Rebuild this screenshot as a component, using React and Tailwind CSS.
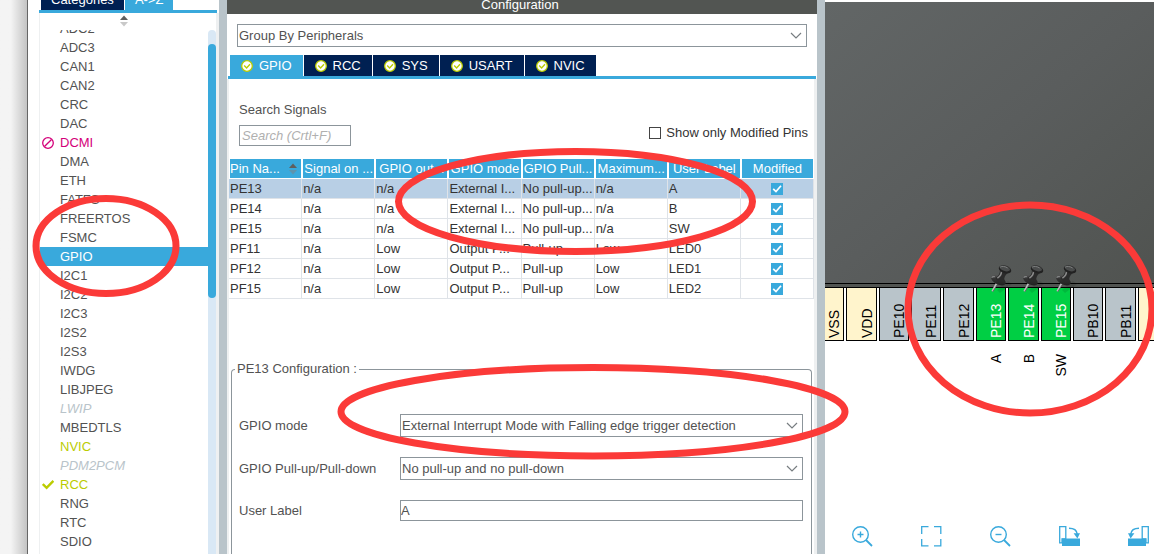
import React from "react";

const peripherals = [
  "ADC2", "ADC3", "CAN1", "CAN2", "CRC", "DAC", "DCMI", "DMA", "ETH", "FATFS",
  "FREERTOS", "FSMC", "GPIO", "I2C1", "I2C2", "I2C3", "I2S2", "I2S3", "IWDG",
  "LIBJPEG", "LWIP", "MBEDTLS", "NVIC", "PDM2PCM", "RCC", "RNG", "RTC", "SDIO",
];

const itemStyle = {
  DCMI: "text-[#d4007a]",
  GPIO: "bg-[#39a9dc] text-white",
  LWIP: "italic text-[#b9c4ca]",
  PDM2PCM: "italic text-[#b9c4ca]",
  NVIC: "text-[#bbcc01]",
  RCC: "text-[#bbcc01]",
};

const headers = ["Pin Na...", "Signal on ...", "GPIO out...", "GPIO mode", "GPIO Pull...", "Maximum...", "User Label", "Modified"];

const rows = [
  ["PE13", "n/a", "n/a", "External I...", "No pull-up...", "n/a", "A"],
  ["PE14", "n/a", "n/a", "External I...", "No pull-up...", "n/a", "B"],
  ["PE15", "n/a", "n/a", "External I...", "No pull-up...", "n/a", "SW"],
  ["PF11", "n/a", "Low", "Output P...", "Pull-up", "Low", "LED0"],
  ["PF12", "n/a", "Low", "Output P...", "Pull-up", "Low", "LED1"],
  ["PF15", "n/a", "Low", "Output P...", "Pull-up", "Low", "LED2"],
];

const pins = [
  { name: "VSS", kind: "power" },
  { name: "VDD", kind: "power" },
  { name: "PE10", kind: "free" },
  { name: "PE11", kind: "free" },
  { name: "PE12", kind: "free" },
  { name: "PE13", kind: "used", label: "A" },
  { name: "PE14", kind: "used", label: "B" },
  { name: "PE15", kind: "used", label: "SW" },
  { name: "PB10", kind: "free" },
  { name: "PB11", kind: "free" },
  { name: "", kind: "power" },
];

const pinStyle = {
  power: "bg-[#fff4cc] text-black",
  free: "bg-[#b9c4ca] text-black",
  used: "bg-[#00cf44] text-white",
};

function SortArrows({ className, up, down }) {
  return (
    <svg className={className} width="8" height="12" viewBox="0 0 8 12" aria-hidden="true">
      <path d="M4 0.5 8 5H0Z" fill={up} />
      <path d="M4 11.5 0 7H8Z" fill={down} />
    </svg>
  );
}

function Forbidden() {
  return (
    <svg width="12" height="12" viewBox="0 0 12 12" fill="none" stroke="#d4007a" strokeWidth="1.3" aria-hidden="true">
      <circle cx="6" cy="6" r="5.3" />
      <path d="M2.7 9.3 9.3 2.7" />
    </svg>
  );
}

function Tick() {
  return (
    <svg width="12" height="12" viewBox="0 0 12 12" fill="none" stroke="#bbcc01" strokeWidth="2.4" aria-hidden="true">
      <path d="M0.8 5 4.6 8.8 11.4 1.8" />
    </svg>
  );
}

function TabBadge() {
  return (
    <svg width="12" height="12" viewBox="0 0 12 12" fill="none" aria-hidden="true">
      <circle cx="6" cy="6" r="5.3" fill="#fff" stroke="#bbcc01" strokeWidth="1.3" />
      <path d="M3.2 5.6 5.6 7.9 9 4.3" stroke="#bbcc01" strokeWidth="1.4" />
    </svg>
  );
}

function Dropdown({ id, label, value }) {
  return (
    <div className="relative">
      <select
        id={id}
        aria-label={label}
        className="block h-[23px] w-full appearance-none border border-[#8c959b] bg-white pl-px pr-6 text-[#525252] outline-none"
      >
        <option>{value}</option>
      </select>
      <svg className="pointer-events-none absolute right-1 top-2 mr-px" width="12" height="8" viewBox="0 0 12 8" fill="none" stroke="#777d80" strokeWidth="1.2" aria-hidden="true">
        <path d="M1 1 6 6 11 1" />
      </svg>
    </div>
  );
}

function Tab({ name, active }) {
  return (
    <button type="button" className={`flex h-[21px] items-center gap-1.5 px-[11px] text-white ${active ? "bg-[#39a9dc]" : "bg-[#002052]"}`}>
      <TabBadge />
      {name}
    </button>
  );
}

function PushPin() {
  return (
    <svg className="absolute -top-6 left-3 z-10" width="26" height="30" viewBox="0 0 26 30" aria-hidden="true">
      <defs>
        <linearGradient id="pinMetal" x1="0" y1="0" x2="1" y2="1">
          <stop offset="0" stopColor="#6a6a6a" />
          <stop offset="0.4" stopColor="#333" />
          <stop offset="1" stopColor="#1a1a1a" />
        </linearGradient>
      </defs>
      <path d="M9 26 20 17 24 20 12 29Z" fill="#000" opacity="0.1" />
      <path d="M9.4 18 4.2 27.4" stroke="#bcbfbf" strokeWidth="1.8" />
      <path d="M10.6 18.6 4.8 27.8" stroke="#555" strokeWidth="0.8" />
      <ellipse cx="10.4" cy="16.2" rx="8" ry="4.2" transform="rotate(27 10.4 16.2)" fill="url(#pinMetal)" />
      <path d="M7.6 14C10.4 12.4 12.2 9.6 12 5.6L20 8.8C17.2 10.8 16 13.6 16.2 17.2 13.6 18.8 8.4 17 7.6 14Z" fill="#2b2b2b" />
      <path d="M9.4 14.2C11.8 12.6 13.4 10.2 13.6 7.4" stroke="#8a8a8a" strokeWidth="1.5" fill="none" />
      <ellipse cx="17" cy="5.4" rx="6.4" ry="3.8" transform="rotate(18 17 5.4)" fill="#222" />
      <ellipse cx="16.8" cy="4.4" rx="5.4" ry="2.6" transform="rotate(18 16.8 4.4)" fill="#4a4c4c" />
      <path d="M12.2 3.2C14.2 1.8 17 2.4 19.6 4" stroke="#7b7d7d" strokeWidth="1" fill="none" />
      <path d="M3.6 13.6C4.4 12.6 5.6 12.4 7 12.8" stroke="#858787" strokeWidth="1.1" fill="none" />
    </svg>
  );
}

function ZoomIcon({ plus }) {
  return (
    <svg width="21" height="21" viewBox="0 0 21 21" fill="none" stroke="#39a9dc" strokeWidth="1.4" aria-hidden="true">
      <circle cx="8.5" cy="8.5" r="7.8" />
      <path d="M14 14 20 20" strokeWidth="1.8" />
      <path d={plus ? "M5.5 8.5H11.5M8.5 5.5V11.5" : "M5.5 8.5H11.5"} />
    </svg>
  );
}

function FitIcon() {
  return (
    <svg width="21" height="21" viewBox="0 0 21 21" fill="none" stroke="#39a9dc" strokeWidth="1.3" aria-hidden="true">
      <path d="M0.7 8V0.7H7.5M13 0.7H19.8V8M19.8 13V19.8H13M7.5 19.8H0.7V13" />
    </svg>
  );
}

function RotateIcon({ flipped }) {
  return (
    <svg width="21" height="21" viewBox="0 0 21 21" fill="none" aria-hidden="true">
      <g transform={flipped ? "translate(21 0) scale(-1 1)" : undefined}>
        <path d="M0.7 0.7H6.8V13H3V16.8H0.7Z" stroke="#39a9dc" strokeWidth="1.3" />
        <path d="M3 12.5H21V20H3Z" fill="#39a9dc" />
        <path d="M10 2.2C14.5 2.2 17.8 4.4 18.2 8" stroke="#39a9dc" strokeWidth="1.4" />
        <path d="M14.6 7.2H21L18.4 12.4Z" fill="#39a9dc" />
      </g>
    </svg>
  );
}

function Sidebar() {
  return (
    <aside className="flex w-[180px] shrink-0 flex-col">
      <div className="flex h-2.5 items-end gap-px overflow-hidden pl-0.5 text-white">
        <button type="button" className="h-5 shrink-0 bg-[#002052] px-2.5">Categories</button>
        <button type="button" className="h-5 shrink-0 bg-[#39a9dc] px-2.5">A-&gt;Z</button>
      </div>
      <div className="mr-0.5 h-[3px] shrink-0 bg-[#39a9dc]" />
      <div className="flex min-h-0 flex-1 flex-col border-l border-r-[3px] border-[#eef0f1]">
        <div className="flex h-[17px] shrink-0 justify-center pr-2 pt-0.5">
          <SortArrows up="#5f5f5f" down="#c9c9c9" />
        </div>
        <div className="flex min-h-0 flex-1">
          <ul className="min-w-0 flex-1 overflow-hidden text-[#525252]">
            {peripherals.map((name, i) => (
              <li key={name} className={`flex h-[19px] items-center ${i === 0 ? "-mt-[11px]" : ""} ${itemStyle[name] || ""}`}>
                <span className="flex w-5 shrink-0 pl-0.5">
                  {name === "DCMI" && <Forbidden />}
                  {name === "RCC" && <Tick />}
                </span>
                {name}
              </li>
            ))}
          </ul>
          <div className="w-2 rounded-t-full bg-[#d9e8f5] pt-3.5">
            <div className="h-[254px] rounded-full bg-[#39a9dc]" />
          </div>
        </div>
      </div>
    </aside>
  );
}

function PinTable() {
  return (
    <table className="mt-[13px] w-full table-fixed border-separate border-spacing-0">
      <thead>
        <tr className="h-5 text-white">
          {headers.map((h, i) => (
            <th key={h} className="overflow-hidden whitespace-nowrap border-x border-b border-white bg-[#39a9dc] p-0 text-center font-normal">
              {i === 0 ? (
                <span className="flex items-center justify-between pr-1">
                  {h}
                  <SortArrows up="#5f5f5f" down="#5d93ad" />
                </span>
              ) : (
                h
              )}
            </th>
          ))}
        </tr>
      </thead>
      <tbody className="text-[#333]">
        {rows.map((r, i) => (
          <tr key={r[0]} className={`h-5 ${i === 0 ? "bg-[#b8cfe5]" : ""}`}>
            {r.map((c, j) => (
              <td key={j} className="overflow-hidden whitespace-nowrap border-b border-r border-[#dfe3e8] p-0 pl-px">{c}</td>
            ))}
            <td className="border-b border-r border-[#dfe3e8] p-0">
              <span className="relative mx-auto flex size-3">
                <input
                  type="checkbox"
                  defaultChecked
                  aria-label={`${r[0]} modified`}
                  className="size-3 appearance-none border border-[#39a9dc] bg-white checked:bg-[#39a9dc]"
                />
                <svg className="pointer-events-none absolute inset-0" width="12" height="12" viewBox="0 0 12 12" fill="none" stroke="#fff" strokeWidth="1.7" aria-hidden="true">
                  <path d="M2.2 5.8 5 8.6 10 2.8" />
                </svg>
              </span>
            </td>
          </tr>
        ))}
      </tbody>
    </table>
  );
}

function Configuration() {
  return (
    <main className="flex min-w-0 flex-1 flex-col text-[#525252]">
      <h1 className="flex h-3.5 shrink-0 items-end justify-center overflow-hidden bg-[#525552] pb-px pr-1 text-white">Configuration</h1>
      <div className="px-2.5 pt-2.5">
        <Dropdown label="Grouping" value="Group By Peripherals" />
      </div>
      <div className="mt-2 flex gap-px pl-[3px]">
        <Tab name="GPIO" active />
        <Tab name="RCC" />
        <Tab name="SYS" />
        <Tab name="USART" />
        <Tab name="NVIC" />
      </div>
      <div className="ml-px mr-px h-[3px] shrink-0 bg-[#39a9dc]" />
      <div className="flex min-h-0 flex-1 flex-col border-l-2 border-r-[3px] border-[#eef0f1]">
        <div className="flex items-end justify-between pl-2.5 pr-1.5 pt-[23px]">
          <div>
            <label htmlFor="search" className="block">Search Signals</label>
            <input
              id="search"
              type="text"
              placeholder="Search (Crtl+F)"
              className="mt-[7px] block h-[21px] w-28 border border-[#8c959b] px-0.5 outline-none placeholder:italic placeholder:text-[#b0b0b0]"
            />
          </div>
          <label className="flex items-center gap-[5px] pb-[5px] text-[#333]">
            <input type="checkbox" className="size-3 appearance-none border border-[#444] bg-white" />
            Show only Modified Pins
          </label>
        </div>
        <PinTable />
        <fieldset className="mx-0.5 mt-[62px] min-h-0 flex-1 rounded-t border border-b-0 border-[#8c959b] pl-[7px] pr-2">
          <legend className="-ml-1 px-0.5">PE13 Configuration :</legend>
          <div className="grid grid-cols-[161px_1fr] items-center gap-y-5 pt-[37px]">
            <label htmlFor="mode">GPIO mode</label>
            <Dropdown id="mode" value="External Interrupt Mode with Falling edge trigger detection" />
            <label htmlFor="pull">GPIO Pull-up/Pull-down</label>
            <Dropdown id="pull" value="No pull-up and no pull-down" />
            <label htmlFor="user-label">User Label</label>
            <input id="user-label" type="text" defaultValue="A" className="h-[21px] w-full border border-[#8c959b] bg-white outline-none" />
          </div>
        </fieldset>
      </div>
    </main>
  );
}

function Pinout() {
  return (
    <section className="flex w-[329px] shrink-0 flex-col overflow-hidden pt-0.5">
      <div className="h-[281px] shrink-0 bg-linear-to-br from-[#626666] via-[#5a5d5d] to-[#505350]" />
      <div className="h-[5px] shrink-0 border-y border-black bg-[#525552]" />
      <div className="-ml-[11px] -mr-[14px] flex gap-0.5 text-sm leading-4">
        {pins.map((p, i) => (
          <div key={i} className="relative flex min-w-0 flex-1 flex-col">
            {p.kind === "used" && <PushPin />}
            <div className={`flex h-[53px] items-start justify-end border-x border-b border-black pr-px ${pinStyle[p.kind]}`}>
              <span className="h-full rotate-180 pt-0.5 [writing-mode:vertical-rl]">{p.name}</span>
            </div>
            {p.label && (
              <div className="mt-[13px] flex justify-end pr-0.5 text-black">
                <span className="rotate-180 [writing-mode:vertical-rl]">{p.label}</span>
              </div>
            )}
          </div>
        ))}
      </div>
      <div className="mt-auto flex justify-between pb-[7px] pl-[27px] pr-[5px]">
        <button type="button" aria-label="Zoom in"><ZoomIcon plus /></button>
        <button type="button" aria-label="Best fit"><FitIcon /></button>
        <button type="button" aria-label="Zoom out"><ZoomIcon /></button>
        <button type="button" aria-label="Rotate clockwise"><RotateIcon /></button>
        <button type="button" aria-label="Rotate counter-clockwise"><RotateIcon flipped /></button>
      </div>
    </section>
  );
}

export default function App() {
  return (
    <div className="relative flex h-screen overflow-hidden bg-white font-['Liberation_Sans',Arial,sans-serif] text-[13px] leading-4">
      <div className="w-7 shrink-0 border-r border-[#666] bg-linear-to-r from-[#f4f4f4] from-40% to-[#c4c4c4]" />
      <div className="w-[11px] shrink-0" />
      <Sidebar />
      <div className="w-2 shrink-0 bg-[#b9c4ca]" />
      <Configuration />
      <div className="w-2 shrink-0 bg-[#b9c4ca]" />
      <Pinout />
      <svg className="pointer-events-none absolute left-0 top-0 z-20" width="1154" height="554" viewBox="0 0 1154 554" fill="none" stroke="#fb3a38" strokeWidth="7" aria-hidden="true">
        <ellipse cx="106" cy="246" rx="70" ry="47.5" />
        <ellipse cx="575.5" cy="201.5" rx="177" ry="50" />
        <ellipse cx="593" cy="411.7" rx="252" ry="44.2" />
        <ellipse cx="1030" cy="309" rx="122" ry="104" />
      </svg>
    </div>
  );
}
